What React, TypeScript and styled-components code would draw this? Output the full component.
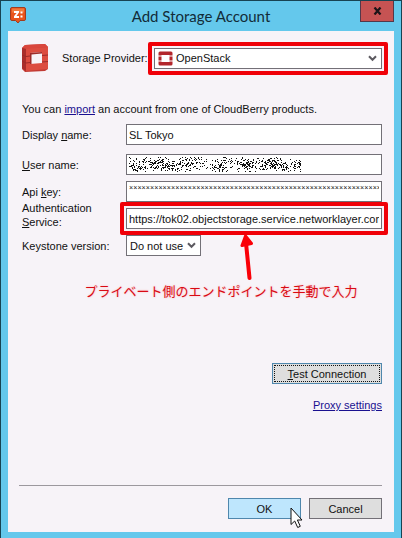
import React from "react";
import styled, { createGlobalStyle, css } from "styled-components";

const GlobalStyle = createGlobalStyle`
  * { box-sizing: border-box; }
  body { margin: 0; background: #64c8ec; }
  body, button, input, select {
    font-family: "Liberation Sans", Roboto, "Noto Sans CJK JP", sans-serif;
    font-size: 11px;
    line-height: 14px;
    color: #111;
  }
`;

const Dialog = styled.main`
  display: flex;
  flex-direction: column;
  min-height: 100vh;
  padding: 0 7px 6px;
  border: 1px solid #174352;
  border-bottom: 0;
  background: #64c8ec;
`;

const TitleBar = styled.header`
  display: grid;
  grid-template-columns: 34px 1fr 34px;
  height: 30px;
`;

const AppIcon = styled.svg`
  width: 18px;
  height: 18px;
  margin: 5px 0 0 1px;
`;

const Title = styled.h1`
  margin: 0;
  text-align: center;
  font-family: Lato, "Noto Sans", sans-serif;
  font-size: 15px;
  font-weight: 400;
  line-height: 30px;
  color: #122c38;
`;

const CloseButton = styled.button`
  display: flex;
  align-items: center;
  justify-content: center;
  height: 21px;
  padding: 0;
  border: 1px solid #54384a;
  border-top: 0;
  background: #c65353;
`;

const Panel = styled.form`
  display: flex;
  flex: 1;
  flex-direction: column;
  padding: 11px 12px 13px 14px;
  background: #f7f3f8;
`;

const ProviderRow = styled.div`
  display: grid;
  grid-template-columns: 40px 92px 1fr;
  align-items: center;
  height: 32px;
`;

const ProviderLogo = styled.svg`
  width: 27px;
  height: 28px;
`;

const Intro = styled.p`
  margin: 28px 0 8px;
`;

const Link = styled.a`
  color: #1a1090;
  text-decoration: underline;
`;

const Fields = styled.div`
  display: flex;
  flex-direction: column;
  gap: 6px;
`;

const FieldRow = styled.div<{ $spaced?: boolean }>`
  display: grid;
  grid-template-columns: 104px 1fr;
  align-items: center;
  height: 21px;
  margin-bottom: ${(p) => (p.$spaced ? "3px" : "0")};
`;

const Label = styled.label<{ $raised?: boolean }>`
  line-height: 14px;
  margin-top: ${(p) => (p.$raised ? "-8px" : "0")};
`;

const FieldBox = styled.div<{ $marked?: boolean }>`
  position: relative;
  display: flex;
  ${(p) =>
    p.$marked &&
    css`
      &::after {
        content: "";
        position: absolute;
        inset: -6px;
        border: 4px solid #f00008;
        border-radius: 2px;
        pointer-events: none;
      }
    `}
`;

const control = css`
  width: 100%;
  height: 21px;
  border: 1px solid #737077;
  border-radius: 0;
  background: #fff;
  outline: none;
`;

const TextInput = styled.input<{ $masked?: boolean }>`
  ${control}
  padding: 0 2px;
  ${(p) =>
    p.$masked &&
    css`
      padding-bottom: 7px;
      font-family: "Liberation Mono", monospace;
      font-size: 7px;
    `}
`;

const SelectInput = styled.select<{ $icon?: boolean; $compact?: boolean }>`
  ${control}
  appearance: none;
  width: ${(p) => (p.$compact ? "75px" : "100%")};
  padding: 0 ${(p) => (p.$compact ? "0" : "20px")} 0 ${(p) => (p.$icon ? "21px" : "3px")};
`;

const SelectShell = styled.div`
  position: relative;
  display: flex;
  flex: 0 1 auto;
  width: 100%;
`;

const CompactShell = styled(SelectShell)`
  width: 75px;
`;

const Chevron = styled.svg`
  position: absolute;
  top: 7px;
  right: 5px;
  width: 9px;
  height: 7px;
  pointer-events: none;
`;

const SmallLogo = styled.svg`
  position: absolute;
  top: 3px;
  left: 4px;
  width: 15px;
  height: 15px;
  pointer-events: none;
`;

const Scribble = styled.svg`
  position: absolute;
  top: 2px;
  left: 2px;
  width: 174px;
  height: 17px;
  pointer-events: none;
`;

const Note = styled.figure`
  display: flex;
  flex-direction: column;
  align-items: center;
  margin: -22px 0 0;
  padding-left: 38px;
  pointer-events: none;
`;

const Arrow = styled.svg`
  width: 14px;
  height: 48px;
  margin-left: 52px;
`;

const NoteText = styled.figcaption`
  font-family: "Noto Sans CJK JP", sans-serif;
  font-size: 13px;
  line-height: 18px;
  white-space: nowrap;
  color: #d80a14;
  text-shadow: 0 0 2px #ffb0b4;
`;

const Actions = styled.div`
  display: flex;
  flex-direction: column;
  align-items: flex-end;
  gap: 14px;
  margin-top: 63px;
`;

const PushButton = styled.button<{ $kind?: "focus" | "hot" }>`
  position: relative;
  width: ${(p) => (p.$kind === "focus" ? "110px" : "73px")};
  height: 21px;
  padding: 0;
  border: 1px solid ${(p) => (p.$kind ? "#4f87ad" : "#737077")};
  background: ${(p) => (p.$kind === "hot" ? "#bee6fd" : "#dedede")};
  ${(p) =>
    p.$kind === "focus" &&
    css`
      outline: 1px dotted #111;
      outline-offset: -3px;
    `}
`;

const Footer = styled.footer`
  display: flex;
  justify-content: flex-end;
  gap: 8px;
  margin: auto 0 0 -3px;
  padding-top: 12px;
  border-top: 1px solid #9c989e;
`;

const Pointer = styled.svg`
  position: absolute;
  top: 8px;
  left: 61px;
  z-index: 1;
  width: 13px;
  height: 22px;
`;

function makeSpecks() {
  let seed = 91;
  const next = () => {
    seed = (seed * 16807) % 2147483647;
    return seed / 2147483647;
  };
  let path = "";
  for (let x = 1; x < 173; x += 1) {
    for (let y = 1; y < 16; y += 1) {
      const mid = 8 + Math.sin(x / 6) * 2;
      const spread = Math.abs(y - mid) / 9;
      const dense = 0.36 + Math.sin(x / 4.5) * 0.12 + Math.sin(x / 17) * 0.08;
      if (next() < dense * (1 - spread)) path += `M${x} ${y}h1v1h-1z`;
    }
  }
  return path;
}

const specks = makeSpecks();

const ChevronIcon = () => (
  <Chevron viewBox="0 0 9 7" aria-hidden="true">
    <path d="M1 1.2 4.5 4.8 8 1.2" fill="none" stroke="#5c5a60" strokeWidth="2" />
  </Chevron>
);

export default function App() {
  return (
    <>
      <GlobalStyle />
      <Dialog>
        <TitleBar>
          <AppIcon viewBox="0 0 18 18" aria-hidden="true">
            <path d="M3 1.5h12q1.5 0 1.5 1.5v10q0 1.5-1.5 1.5h-4L9 17l-2.5-2.5H3q-1.500 0-1.500-1.500V3q0-1.500 1.500-1.500z" fill="#e9541c" stroke="#a23c1d" />
            <path d="M3 2.500h12v4H3z" fill="#f07a3c" />
            <path d="M5 5h5v1.500L7.500 10H10v2H5v-1.700L7.600 7H5z" fill="#fff" />
            <path d="M11.500 5.500h2v2h-2zM11.500 9.500h2v2h-2z" fill="#fff" />
          </AppIcon>
          <Title>Add Storage Account</Title>
          <CloseButton type="button" aria-label="Close">
            <svg width="9" height="8" viewBox="0 0 9 8" aria-hidden="true">
              <path d="M1.500 0.500 7.500 7.500M7.500 0.500 1.500 7.500" stroke="#1c1418" strokeWidth="2.200" />
            </svg>
          </CloseButton>
        </TitleBar>
        <Panel onSubmit={(e) => e.preventDefault()}>
          <ProviderRow>
            <ProviderLogo viewBox="0 0 27 28" aria-hidden="true">
              <path d="M0 4 3 1 23 0l3 3v22l-3 2-20 1-3-3z" fill="#c13a34" />
              <path d="M4 4 26 3v22L4 27z" fill="#dc4c40" />
              <path d="M0 4 3 1 23 0l3 3L4 5z" fill="#d9463d" />
              <path d="M0 4l4 1v22l-4-3z" fill="#a92e2c" />
              <path d="M8 9 20 8v11L8 20z" fill="#f7f3f8" />
              <path d="M8 9l12-1v1.500L9.500 10.500V20H8z" fill="#9d2b29" />
              <path d="M0 11l4 1.500 4-.5M0 17l4 2 4-.5M20 11.500l6-.5M20 18l6-.5" fill="none" stroke="#9d2b29" />
            </ProviderLogo>
            <Label htmlFor="provider">Storage Provider:</Label>
            <FieldBox $marked>
              <SelectShell>
                <SelectInput id="provider" $icon defaultValue="OpenStack">
                  <option>OpenStack</option>
                </SelectInput>
                <SmallLogo viewBox="0 0 15 15" aria-hidden="true">
                  <path d="M2 .5h11q1.500 0 1.500 1.500v2.500h-3V4h-8v.5h-3V2Q.5.500 2 .5z" fill="#b3262c" />
                  <path d="M.5 5.500h3v4h-3zM11.500 5.500h3v4h-3z" fill="#b3262c" />
                  <path d="M.5 10.500h3v.5h8v-.5h3V13q0 1.500-1.500 1.500H2Q.5 14.500.5 13z" fill="#b3262c" />
                </SmallLogo>
                <ChevronIcon />
              </SelectShell>
            </FieldBox>
          </ProviderRow>

          <Intro>
            You can <Link href="#import">import</Link> an account from one of CloudBerry products.
          </Intro>

          <Fields>
            <FieldRow $spaced>
              <Label htmlFor="display">
                Display <u>n</u>ame:
              </Label>
              <FieldBox>
                <TextInput id="display" defaultValue="SL Tokyo" />
              </FieldBox>
            </FieldRow>
            <FieldRow>
              <Label htmlFor="user">
                <u>U</u>ser name:
              </Label>
              <FieldBox>
                <TextInput id="user" />
                <Scribble viewBox="0 0 174 17" shapeRendering="crispEdges" aria-hidden="true">
                  <path d={specks} fill="#111" />
                </Scribble>
              </FieldBox>
            </FieldRow>
            <FieldRow>
              <Label htmlFor="key">
                Api <u>k</u>ey:
              </Label>
              <FieldBox>
                <TextInput id="key" $masked defaultValue={"×".repeat(60)} />
              </FieldBox>
            </FieldRow>
            <FieldRow>
              <Label htmlFor="service" $raised>
                Authentication
                <br />
                <u>S</u>ervice:
              </Label>
              <FieldBox $marked>
                <TextInput id="service" defaultValue="https://tok02.objectstorage.service.networklayer.com" />
              </FieldBox>
            </FieldRow>
            <FieldRow>
              <Label htmlFor="keystone">Keystone version:</Label>
              <FieldBox>
                <CompactShell>
                  <SelectInput id="keystone" $compact defaultValue="Do not use">
                    <option>Do not use</option>
                  </SelectInput>
                  <ChevronIcon />
                </CompactShell>
              </FieldBox>
            </FieldRow>
          </Fields>

          <Note>
            <Arrow viewBox="0 0 14 48" aria-hidden="true">
              <path d="M6 9 9.500 44" stroke="#fa0008" strokeWidth="4" strokeLinecap="round" />
              <path d="M5.500 2 2 11.500 11.500 9.500z" fill="#fa0008" stroke="#fa0008" strokeWidth="3" strokeLinejoin="round" />
            </Arrow>
            <NoteText lang="ja">プライベート側のエンドポイントを手動で入力</NoteText>
          </Note>

          <Actions>
            <PushButton type="button" $kind="focus">
              <u>T</u>est Connection
            </PushButton>
            <Link href="#proxy">Proxy settings</Link>
          </Actions>

          <Footer>
            <PushButton type="submit" $kind="hot">
              OK
              <Pointer viewBox="0 0 13 22" aria-hidden="true">
                <path d="M1 1v16.500l3.700-3.500 3 6.500 2.600-1.200L7.400 13H12z" fill="#fff" stroke="#111" />
              </Pointer>
            </PushButton>
            <PushButton type="button">Cancel</PushButton>
          </Footer>
        </Panel>
      </Dialog>
    </>
  );
}
